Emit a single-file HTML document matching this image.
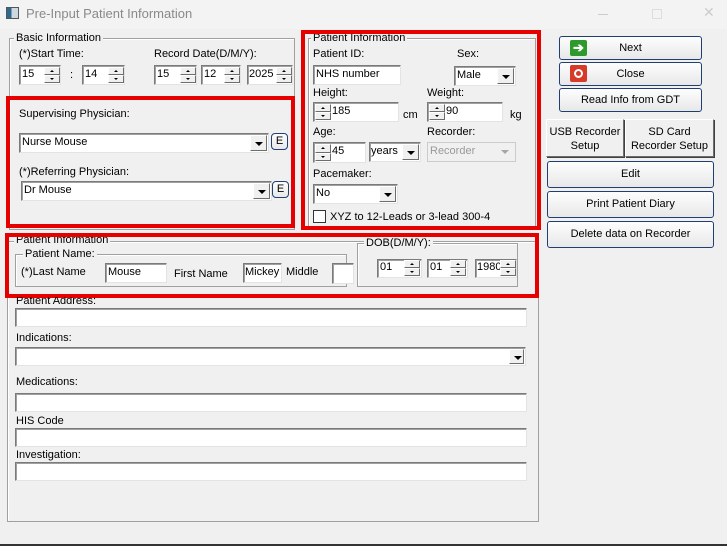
<!DOCTYPE html><html><head><meta charset="utf-8"><style>
*{box-sizing:border-box;margin:0;padding:0}
body{width:727px;height:546px;background:#f0f0f0;font-family:"Liberation Sans",sans-serif;font-size:11px;color:#000;position:relative;overflow:hidden}
div,span{position:absolute}
.t{white-space:nowrap;line-height:14px}
.in{background:#fff;border:1px solid;border-color:#7a7a7a #e3e3e3 #e3e3e3 #7a7a7a;box-shadow:inset 1px 1px 0 #a0a0a0;padding:1px 2px;line-height:15px;white-space:nowrap;overflow:hidden}
.gb{border:1px solid #a0a0a0;box-shadow:inset 1px 1px 0 #fff}
.gl{background:#f0f0f0;padding:0 2px;white-space:nowrap;line-height:12px}
.red{border:4px solid #e60000}
.sp{width:16px;background:#f0f0f0}
.sp i{position:absolute;left:0;width:16px;height:50%;border:1px solid;border-color:#fff #6d6d6d #6d6d6d #fff;display:block}
.sp i:first-child{top:0}.sp i:last-child{bottom:0}
.sp i:first-child:after{content:"";position:absolute;left:5px;top:2px;border:2px solid transparent;border-bottom:2px solid #000;border-top:0}
.sp i:last-child:after{content:"";position:absolute;left:5px;top:2px;border:2px solid transparent;border-top:2px solid #000;border-bottom:0}
.dd{width:17px;top:1px;bottom:1px;right:1px;background:#f0f0f0;border:1px solid;border-color:#fff #6d6d6d #6d6d6d #fff}
.dd:after{content:"";position:absolute;left:4px;top:6px;border:4px solid transparent;border-top:4px solid #000;border-bottom:0}
.btn{background:linear-gradient(#fdfdfd,#e8e8e8);border:1px solid #1f3f73;border-radius:3px;text-align:center;white-space:nowrap}
.b2{background:#f0f0f0;border:1px solid;border-color:#fff #6d6d6d #6d6d6d #fff;box-shadow:1px 1px 0 #404040;text-align:center;line-height:14px;white-space:nowrap}
</style></head><body>
<div style="left:0;top:0;width:727px;height:29px;background:#f3f3f3"></div>
<div style="left:6px;top:7px;width:13px;height:12px;border:1px solid #555;background:linear-gradient(90deg,#2d6a8f 40%,#cfd8de 40%)"></div>
<div class="t" style="left:26px;top:7px;font-size:13px;color:#8a8a8a">Pre-Input Patient Information</div>
<div style="left:598px;top:14px;width:10px;height:1px;background:#ccc"></div>
<div style="left:652px;top:9px;width:10px;height:10px;border:1px solid #ddd"></div>
<div class="t" style="left:703px;top:5px;color:#ccc;font-size:14px">✕</div>

<div class="gb" style="left:9px;top:38px;width:286px;height:192px"></div>
<div class="gl t" style="left:14px;top:32px">Basic Information</div>
<div class="t" style="left:19px;top:47px">(*)Start Time:</div>
<div class="t" style="left:154px;top:47px">Record Date(D/M/Y):</div>
<div class="in" style="left:19px;top:65px;width:42px;height:20px">15</div><div class="sp" style="left:44px;top:67px;height:16px"><i></i><i></i></div>
<div class="t" style="left:70px;top:68px">:</div>
<div class="in" style="left:82px;top:65px;width:43px;height:20px">14</div><div class="sp" style="left:108px;top:67px;height:16px"><i></i><i></i></div>
<div class="in" style="left:154px;top:65px;width:43px;height:20px">15</div><div class="sp" style="left:180px;top:67px;height:16px"><i></i><i></i></div>
<div class="in" style="left:201px;top:65px;width:40px;height:20px">12</div><div class="sp" style="left:224px;top:67px;height:16px"><i></i><i></i></div>
<div class="in" style="left:247px;top:65px;width:46px;height:20px;padding-left:1px">2025</div><div class="sp" style="left:276px;top:67px;height:16px"><i></i><i></i></div>

<div class="red" style="left:6px;top:96px;width:289px;height:132px"></div>
<div class="t" style="left:19px;top:107px">Supervising Physician:</div>
<div class="in" style="left:19px;top:133px;width:250px;height:20px">Nurse Mouse<div class="dd"></div></div>
<div class="btn" style="left:271px;top:133px;width:17px;height:17px;line-height:14px;border-radius:4px">E</div>
<div class="t" style="left:19px;top:165px">(*)Referring Physician:</div>
<div class="in" style="left:21px;top:181px;width:251px;height:20px">Dr Mouse<div class="dd"></div></div>
<div class="btn" style="left:272px;top:181px;width:17px;height:17px;line-height:14px;border-radius:4px">E</div>

<div class="gb" style="left:308px;top:38px;width:228px;height:190px"></div>
<div class="gl t" style="left:311px;top:32px">Patient Information</div>
<div class="red" style="left:301px;top:30px;width:240px;height:200px"></div>
<div class="t" style="left:313px;top:47px">Patient ID:</div>
<div class="t" style="left:457px;top:47px">Sex:</div>
<div class="in" style="left:313px;top:65px;width:88px;height:20px">NHS number</div>
<div class="in" style="left:454px;top:66px;width:62px;height:20px">Male<div class="dd"></div></div>
<div class="t" style="left:313px;top:86px">Height:</div>
<div class="t" style="left:427px;top:86px">Weight:</div>
<div class="in" style="left:313px;top:102px;width:86px;height:20px;padding-left:18px">185</div><div class="sp" style="left:315px;top:104px;height:16px"><i></i><i></i></div>
<div class="t" style="left:403px;top:108px">cm</div>
<div class="in" style="left:427px;top:102px;width:76px;height:20px;padding-left:18px">90</div><div class="sp" style="left:429px;top:104px;height:16px"><i></i><i></i></div>
<div class="t" style="left:510px;top:108px">kg</div>
<div class="t" style="left:313px;top:125px">Age:</div>
<div class="t" style="left:427px;top:125px">Recorder:</div>
<div class="in" style="left:313px;top:142px;width:53px;height:21px;padding-left:18px">45</div><div class="sp" style="left:315px;top:144px;height:17px"><i></i><i></i></div>
<div class="in" style="left:369px;top:142px;width:52px;height:20px;padding-left:1px">years<div class="dd"></div></div>
<div class="in" style="left:427px;top:142px;width:89px;height:20px;background:#f0f0f0;color:#999;box-shadow:none;border-color:#ccc">Recorder<div class="dd" style="border:none;opacity:.3"></div></div>
<div class="t" style="left:313px;top:167px">Pacemaker:</div>
<div class="in" style="left:313px;top:184px;width:85px;height:20px">No<div class="dd"></div></div>
<div style="left:313px;top:210px;width:13px;height:13px;background:#fff;border:1px solid #333"></div>
<div class="t" style="left:330px;top:210px">XYZ to 12-Leads or 3-lead 300-4</div>

<div class="btn" style="left:559px;top:36px;width:143px;height:24px;line-height:22px">Next</div>
<div style="left:570px;top:40px;width:17px;height:16px;background:#2e9a2e;border-radius:2px;color:#fff;font-weight:bold;font-size:13px;line-height:16px;text-align:center">➔</div>
<div class="btn" style="left:559px;top:62px;width:143px;height:24px;line-height:22px">Close</div>
<div style="left:570px;top:65px;width:17px;height:17px;background:#d83a2a;border-radius:2px"></div>
<div style="left:574px;top:69px;width:9px;height:9px;border:2px solid #fff;border-radius:50%"></div>
<div class="btn" style="left:559px;top:88px;width:143px;height:24px;line-height:22px">Read Info from GDT</div>
<div class="b2" style="left:546px;top:119px;width:78px;height:38px;padding-top:5px">USB Recorder<br>Setup</div>
<div class="b2" style="left:625px;top:119px;width:89px;height:38px;padding-top:5px">SD Card<br>Recorder Setup</div>
<div class="btn" style="left:547px;top:161px;width:167px;height:27px;line-height:24px">Edit</div>
<div class="btn" style="left:547px;top:191px;width:167px;height:27px;line-height:24px">Print Patient Diary</div>
<div class="btn" style="left:547px;top:221px;width:167px;height:27px;line-height:24px">Delete data on Recorder</div>

<div class="gb" style="left:7px;top:241px;width:532px;height:281px"></div>
<div class="gl t" style="left:14px;top:234px">Patient Information</div>
<div class="gb" style="left:15px;top:254px;width:332px;height:33px"></div>
<div class="gl t" style="left:23px;top:248px">Patient Name:</div>
<div class="t" style="left:21px;top:265px">(*)Last Name</div>
<div class="in" style="left:105px;top:263px;width:62px;height:20px">Mouse</div>
<div class="t" style="left:174px;top:267px">First Name</div>
<div class="in" style="left:243px;top:263px;width:39px;height:20px;padding:1px">Mickey</div>
<div class="t" style="left:286px;top:265px">Middle</div>
<div class="in" style="left:332px;top:263px;width:22px;height:21px"></div>
<div class="gb" style="left:357px;top:243px;width:161px;height:44px"></div>
<div class="gl t" style="left:364px;top:237px">DOB(D/M/Y):</div>
<div class="in" style="left:377px;top:259px;width:45px;height:19px;padding-top:0">01</div><div class="sp" style="left:404px;top:260px;height:16px"><i></i><i></i></div>
<div class="in" style="left:427px;top:259px;width:41px;height:19px;padding-top:0">01</div><div class="sp" style="left:450px;top:260px;height:16px"><i></i><i></i></div>
<div class="in" style="left:475px;top:259px;width:42px;height:19px;padding:0 1px">1980</div><div class="sp" style="left:500px;top:260px;height:16px"><i></i><i></i></div>
<div class="red" style="left:5px;top:233px;width:534px;height:65px"></div>

<div class="t" style="left:16px;top:294px;clip-path:inset(3px 0 0 0)">Patient Address:</div>
<div class="in" style="left:15px;top:308px;width:512px;height:19px"></div>
<div class="t" style="left:16px;top:331px">Indications:</div>
<div class="in" style="left:15px;top:347px;width:511px;height:19px"><div class="dd" style="width:15px"></div></div>
<div class="t" style="left:16px;top:375px">Medications:</div>
<div class="in" style="left:15px;top:393px;width:512px;height:19px"></div>
<div class="t" style="left:16px;top:414px">HIS Code</div>
<div class="in" style="left:15px;top:428px;width:512px;height:19px"></div>
<div class="t" style="left:16px;top:448px">Investigation:</div>
<div class="in" style="left:15px;top:462px;width:512px;height:19px"></div>
<div style="left:0;top:544px;width:727px;height:2px;background:#333"></div>
</body></html>
